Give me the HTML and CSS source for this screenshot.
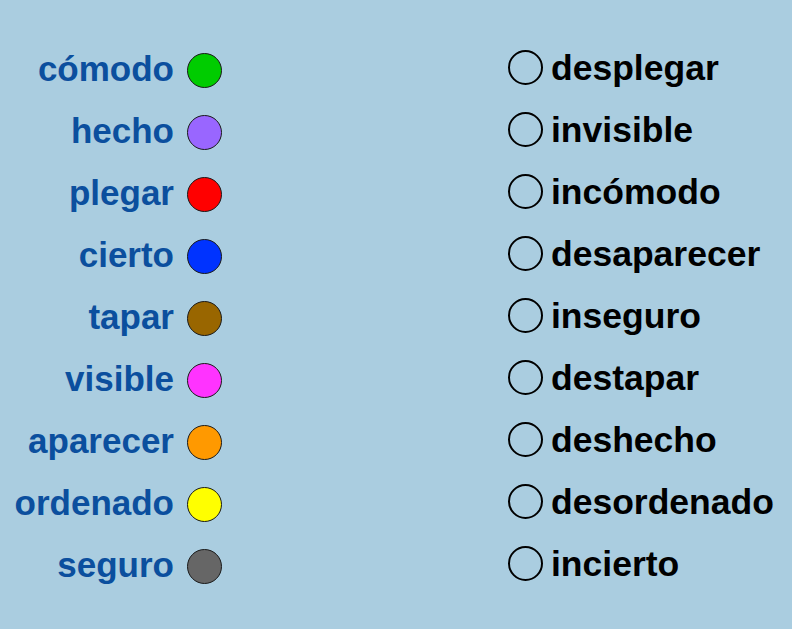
FILE: index.html
```html
<!DOCTYPE html>
<html lang="es">
<head>
<meta charset="utf-8">
<title>Antónimos</title>
<link rel="stylesheet" href="styles.css">
</head>
<body>
<div class="board">
  <div class="row"><div class="left"><span class="word">cómodo</span><span class="dot c-green"></span></div><div class="right"><span class="ring"></span><span class="ans">desplegar</span></div></div>
  <div class="row"><div class="left"><span class="word">hecho</span><span class="dot c-purple"></span></div><div class="right"><span class="ring"></span><span class="ans">invisible</span></div></div>
  <div class="row"><div class="left"><span class="word">plegar</span><span class="dot c-red"></span></div><div class="right"><span class="ring"></span><span class="ans">incómodo</span></div></div>
  <div class="row"><div class="left"><span class="word">cierto</span><span class="dot c-blue"></span></div><div class="right"><span class="ring"></span><span class="ans">desaparecer</span></div></div>
  <div class="row"><div class="left"><span class="word">tapar</span><span class="dot c-brown"></span></div><div class="right"><span class="ring"></span><span class="ans">inseguro</span></div></div>
  <div class="row"><div class="left"><span class="word">visible</span><span class="dot c-magenta"></span></div><div class="right"><span class="ring"></span><span class="ans">destapar</span></div></div>
  <div class="row"><div class="left"><span class="word">aparecer</span><span class="dot c-orange"></span></div><div class="right"><span class="ring"></span><span class="ans">deshecho</span></div></div>
  <div class="row"><div class="left"><span class="word">ordenado</span><span class="dot c-yellow"></span></div><div class="right"><span class="ring"></span><span class="ans">desordenado</span></div></div>
  <div class="row"><div class="left"><span class="word">seguro</span><span class="dot c-gray"></span></div><div class="right"><span class="ring"></span><span class="ans">incierto</span></div></div>
</div>
</body>
</html>
```
FILE: styles.css
```css
html, body {
  margin: 0;
  padding: 0;
}
body {
  background: #aacde0;
  font-family: "Liberation Sans", Arial, sans-serif;
  font-weight: bold;
  font-size: 35px;
  width: 792px;
  height: 629px;
  overflow: hidden;
}
.board {
  padding-top: 37px;
}
.row {
  display: flex;
  align-items: center;
  height: 62px;
}
.left {
  width: 222px;
  display: flex;
  justify-content: flex-end;
  align-items: center;
  gap: 13px;
}
.right {
  margin-left: 286px;
  display: flex;
  align-items: center;
  gap: 8px;
}
.word {
  color: #0b4f9e;
  line-height: 35px;
}
.ans {
  color: #000;
  font-size: 35.5px;
  line-height: 35px;
}
.dot {
  width: 33px;
  height: 33px;
  border: 1px solid #1a1a1a;
  border-radius: 50%;
  margin-top: 4px;
  flex: none;
}
.ring {
  width: 31px;
  height: 31px;
  border: 2px solid #000;
  border-radius: 50%;
  margin-bottom: 2px;
  flex: none;
}
.c-green { background: #00cc00; }
.c-purple { background: #9966ff; }
.c-red { background: #ff0000; }
.c-blue { background: #0033ff; }
.c-brown { background: #996600; }
.c-magenta { background: #ff33ff; }
.c-orange { background: #ff9900; }
.c-yellow { background: #ffff00; }
.c-gray { background: #666666; }
```
